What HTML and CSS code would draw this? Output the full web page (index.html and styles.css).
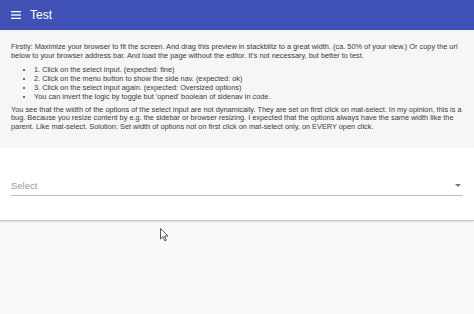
FILE: index.html
```html
<!DOCTYPE html>
<html lang="en">
<head>
    <meta charset="UTF-8">
    <meta name="viewport" content="width=device-width, initial-scale=1.0">
    <title>Test</title>
    <link rel="stylesheet" href="styles.css">
</head>
<body>
    <header class="toolbar">
        <svg class="menu-icon" width="10" height="8" viewBox="0 0 10 8">
            <rect x="0" y="0" width="10" height="1.3" fill="#fff"/>
            <rect x="0" y="3.35" width="10" height="1.3" fill="#fff"/>
            <rect x="0" y="6.7" width="10" height="1.3" fill="#fff"/>
        </svg>
        <span class="title">Test</span>
    </header>

    <section class="intro">
        <p>Firstly: Maximize your browser to fit the screen. And drag this preview in stackblitz to a great width. (ca. 50% of your view.) Or copy the url below to your browser address bar. And load the page without the editor. It's not necessary, but better to test.</p>
        <ul>
            <li>1. Click on the select input. (expected: fine)</li>
            <li>2. Click on the menu button to show the side nav. (expected: ok)</li>
            <li>3. Click on the select input again. (expected: Oversized options)</li>
            <li>You can invert the logic by toggle but 'opned' boolean of sidenav in code.</li>
        </ul>
        <p>You see that the width of the options of the select input are not dynamically. They are set on first click on mat-select. In my opinion, this is a bug. Because you resize content by e.g. the sidebar or browser resizing. I expected that the options always have the same width like the parent. Like mat-select. Solution: Set width of options not on first click on mat-select only, on EVERY open click.</p>
    </section>

    <section class="select-card">
        <div class="select-field">
            <span class="placeholder">Select</span>
            <span class="arrow"></span>
        </div>
    </section>

    <svg class="cursor" width="9" height="14" viewBox="0 0 9 14">
        <path d="M0.5 0.5 L0.5 11 L3 8.6 L4.8 12.8 L6.3 12.1 L4.6 8.1 L8 8.1 Z" fill="#fff" stroke="#444" stroke-width="0.9"/>
    </svg>
</body>
</html>
```

FILE: styles.css
```css
body {
    margin: 0;
    background: #fafafa;
    font-family: "Liberation Sans", Arial, sans-serif;
    color: #3a3a3a;
    height: 314px;
    overflow: hidden;
}

.toolbar {
    display: flex;
    align-items: center;
    height: 30px;
    padding: 0 11px;
    background: #3f51b5;
    color: #fff;
}

.menu-icon {
    margin-right: 9px;
}

.title {
    font-size: 12px;
}

.intro {
    background: #f6f6f6;
    padding: 13px 11px 0;
    height: 105px;
    font-size: 7.35px;
    line-height: 8.7px;
}

.intro p {
    margin: 0;
}

.intro ul {
    margin: 6px 0 4.5px;
    padding-left: 23px;
}

.select-card {
    background: #fff;
    height: 72px;
    padding: 0 11px;
    display: flex;
    align-items: flex-end;
    border-bottom: 1px solid #c6c6c6;
    box-shadow: 0 1px 2px rgba(0, 0, 0, 0.12);
}

.select-field {
    flex: 1;
    display: flex;
    justify-content: space-between;
    align-items: center;
    height: 20px;
    margin-bottom: 24px;
    border-bottom: 1px solid #bdbdbd;
}

.placeholder {
    font-size: 9.5px;
    color: #9a9a9a;
}

.arrow {
    width: 0;
    height: 0;
    margin-right: 2px;
    border-left: 3px solid transparent;
    border-right: 3px solid transparent;
    border-top: 3px solid #757575;
}

.cursor {
    position: absolute;
    left: 160px;
    top: 228px;
}
```
